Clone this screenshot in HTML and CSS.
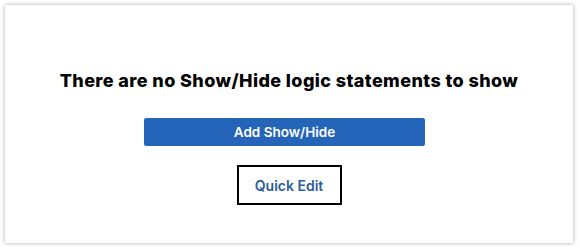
FILE: index.html
```html
<!DOCTYPE html>
<html lang="en">
<head>
    <meta charset="UTF-8">
    <meta name="viewport" content="width=device-width, initial-scale=1.0">
    <title>Show/Hide</title>
    <link rel="stylesheet" href="styles.css">
</head>
<body>
    <div class="panel">
        <h2 class="empty-title">There are no Show/Hide logic statements to show</h2>
        <button class="btn-add">Add Show/Hide</button>
        <button class="btn-quick">Quick Edit</button>
    </div>
</body>
</html>
```

FILE: styles.css
```css
body {
    font-family: Inter, "Noto Sans", sans-serif;
    margin: 0;
    padding: 5px 6px 4px 5px;
    background: #fff;
}

.panel {
    height: 238px;
    box-sizing: border-box;
    background: #fff;
    box-shadow: 0 0 4px rgba(0, 0, 0, 0.35);
    display: flex;
    flex-direction: column;
    align-items: center;
    padding-top: 65px;
}

.empty-title {
    margin: 0;
    font-size: 18px;
    font-weight: 800;
    color: #000;
    letter-spacing: 0.4px;
}

.btn-add {
    margin-top: 27px;
    margin-right: 9px;
    width: 281px;
    height: 28px;
    border: none;
    border-radius: 2px;
    background: #2565b9;
    color: #fff;
    font-family: inherit;
    font-size: 13.5px;
    font-weight: 600;
}

.btn-quick {
    margin-top: 19px;
    width: 105px;
    height: 40px;
    border: 2px solid #000;
    background: #fff;
    color: #2a5d9a;
    font-family: inherit;
    font-size: 14px;
    font-weight: 600;
}
```
